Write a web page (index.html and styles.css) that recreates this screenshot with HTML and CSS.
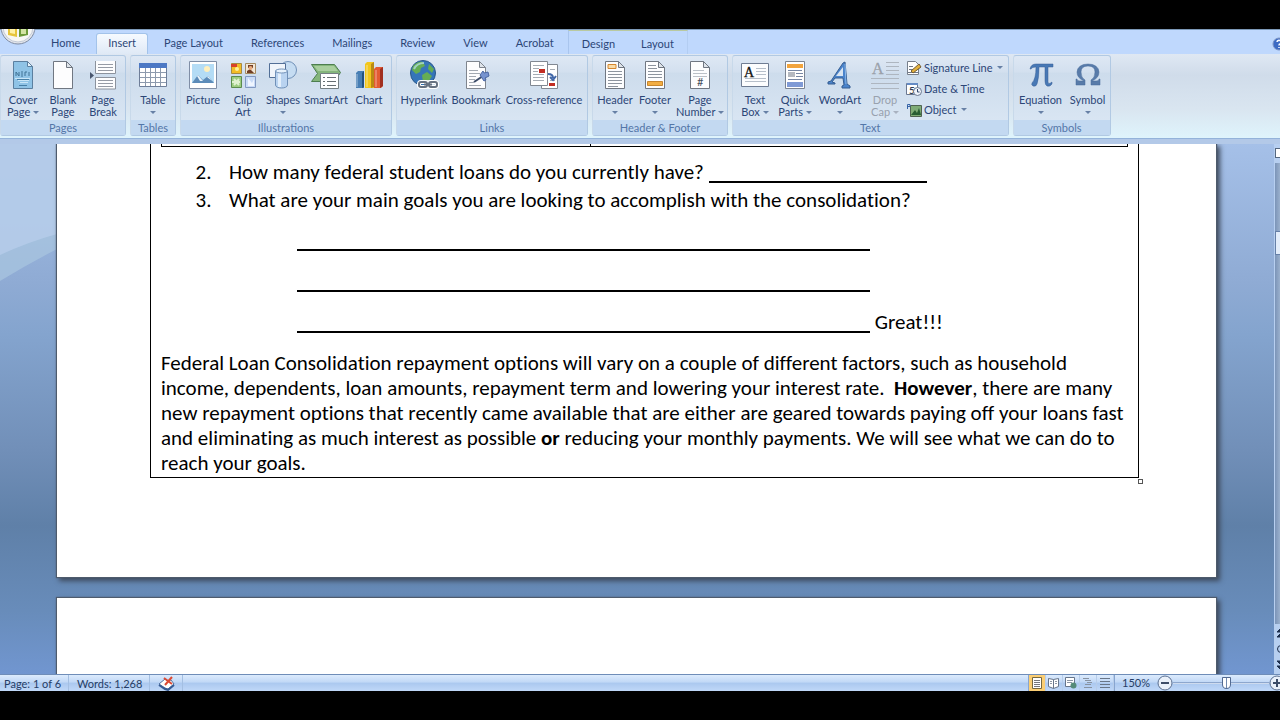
FILE: index.html
```
<!DOCTYPE html>
<html lang="en">
  <head>
    <meta charset="utf-8">
    <title>Document editor</title>
    <link rel="stylesheet" href="styles.css">
  </head>
  <body>
    <div class="app">
      <button class="office-button" aria-label="Office menu">
        <svg width="36" height="36" viewBox="0 0 36 36">
          <circle cx="18" cy="18" r="17" fill="#e3e6ec" stroke="#7e8ba3"/>
          <circle cx="18" cy="18" r="15" fill="#f7f7f5" stroke="#c3cad6"/>
          <path d="M8 17l9-2v13l-9-2z" fill="#e6c43c"/>
          <path d="M10 20h5v5l-5-1z" fill="#fff1a8"/>
          <path d="M19 15l9 2v9l-9 2z" fill="#6d9b3a"/>
          <path d="M21 20h5v5h-5z" fill="#d3e3a4"/>
        </svg>
      </button>

      <div class="tabs">
        <button class="tab">Home</button>
        <button class="tab selected">Insert</button>
        <button class="tab">Page Layout</button>
        <button class="tab">References</button>
        <button class="tab">Mailings</button>
        <button class="tab">Review</button>
        <button class="tab">View</button>
        <button class="tab">Acrobat</button>
        <div class="table-tools">
          <button class="tab">Design</button>
          <button class="tab">Layout</button>
        </div>
        <button class="help" aria-label="Help">
          <svg width="14" height="14" viewBox="0 0 14 14">
            <circle cx="7" cy="7" r="6" fill="#3d6bc4" stroke="#7c94c4"/>
            <path d="M5 5a2 2 0 1 1 3 2q-1 0-1 1.500M7 10v1" fill="none" stroke="#fff" stroke-width="1.500"/>
          </svg>
        </button>
      </div>

      <div class="ribbon">
        <div class="group">
          <div class="group-tools">
            <button class="tool mid">
              <svg width="28" height="28" viewBox="0 0 28 28">
                <path d="M4.500 .5h14l5 5v22h-19z" fill="#8fc3e6" stroke="#5b7f9f"/>
                <path d="M18.500 .5v5h5z" fill="#e4f2fb" stroke="#5b7f9f"/>
                <path d="M7 15v-4l3 4v-4M12 11h2M12 13h2M12 15h2M16 15v-4h2M20 11v4" fill="none" stroke="#3f7396"/>
                <path d="M6 17.500h15M9 19.500h11M11 21.500h8" stroke="#c8e5f7"/>
                <path d="M8 18.500h12M10 24.500h8" stroke="#477fa6"/>
              </svg>
              <span>Cover<br>Page <i class="arrow"></i></span>
            </button>
            <button class="tool narrow">
              <svg width="28" height="28" viewBox="0 0 28 28">
                <path d="M4.500 .5h13l6 6v21h-19z" fill="#fdfdfe" stroke="#707782"/>
                <path d="M17.500 .5v6h6z" fill="#dfe4ea" stroke="#707782"/>
              </svg>
              <span>Blank<br>Page</span>
            </button>
            <button class="tool mid">
              <svg width="28" height="28" viewBox="0 0 28 28">
                <path d="M6.500 0v12.500h20V0M6.500 28V16.500h20V28z" fill="#fdfdfe" stroke="#8b929d"/>
                <path d="M9 3.500h15M9 6.500h15M9 9.500h15M9 19.500h15M9 22.500h15M9 25.500h15" stroke="#969ba5"/>
                <path d="M1 11l4 3.500-4 3.500z" fill="#48566e"/>
              </svg>
              <span>Page<br>Break</span>
            </button>
          </div>
          <div class="group-label">Pages</div>
        </div>

        <div class="group">
          <div class="group-tools">
            <button class="tool mid">
              <svg width="28" height="28" viewBox="0 0 28 28">
                <path d="M.5 2.500h27v23H.5z" fill="#fff" stroke="#6e7e99"/>
                <path d="M0 2h28v5H0z" fill="#4c78c4"/>
                <path d="M1 11.500h26M1 16.500h26M1 21.500h26M6.500 7v18M11.500 7v18M16.500 7v18M21.500 7v18" stroke="#8d9aad"/>
              </svg>
              <span>Table<br><i class="arrow"></i></span>
            </button>
          </div>
          <div class="group-label">Tables</div>
        </div>

        <div class="group">
          <div class="group-tools">
            <button class="tool mid">
              <svg width="28" height="28" viewBox="0 0 28 28">
                <path d="M.5 .5h27v27H.5z" fill="#fff" stroke="#7f8ea6"/>
                <path d="M3 3h22v19H3z" fill="#b4dcf5"/>
                <circle cx="18" cy="8" r="3" fill="#fff0bd"/>
                <path d="M3 22l6-8 5 5 5-4 6 7z" fill="#5d8cb9"/>
                <path d="M8 15l1-1 5 6h-3zM18 16l1-1 4 5z" fill="#e8f3fb"/>
              </svg>
              <span>Picture</span>
            </button>
            <button class="tool narrow">
              <svg width="28" height="28" viewBox="0 0 28 28">
                <path d="M2.500 2.500h10v10h-10z" fill="#f3bd25" stroke="#a68a42"/>
                <path d="M2 3h6v3H2z" fill="#d8412a"/>
                <circle cx="8" cy="8" r="2" fill="#fff09a"/>
                <path d="M16.500 2.500h10v10h-10z" fill="#f1e6d5" stroke="#a58b62"/>
                <path d="M19 4h5v3h-5zM18 10l3-2 4 4h-7z" fill="#703d25"/>
                <circle cx="21.500" cy="7" r="2" fill="#e9ab7d"/>
                <path d="M2.500 15.500h10v11h-10z" fill="#9ccc80" stroke="#5b8b4e"/>
                <path d="M5 18l5 6M10 18l-5 6M3 21h8" stroke="#dff1cf" stroke-width="2"/>
                <path d="M16.500 15.500h10v11h-10z" fill="#c9dbf7" stroke="#8299c2"/>
                <path d="M19 17l4 5 2-4v7h-6z" fill="#eff5ff"/>
              </svg>
              <span>Clip<br>Art</span>
            </button>
            <button class="tool mid">
              <svg width="28" height="28" viewBox="0 0 28 28">
                <circle cx="19" cy="9" r="8.500" fill="#c5dcf2" stroke="#7191b8"/>
                <path d="M.5 2.500h16v14H.5z" fill="#f0f5fb" stroke="#526f97"/>
                <path d="M6.500 10v14c0 4 12 4 12 0V10z" fill="#b9d3f0" stroke="#7191b8"/>
                <path d="M9 12h3v14H9z" fill="#e3effb"/>
                <ellipse cx="12.500" cy="10" rx="6" ry="2" fill="#e7f2fc" stroke="#7191b8"/>
              </svg>
              <span>Shapes<br><i class="arrow"></i></span>
            </button>
            <button class="tool medium">
              <svg width="30" height="28" viewBox="0 0 30 28">
                <path d="M.5 3.500h23l6 8-6 9H.5l6-8z" fill="#84b57b" stroke="#4d7e4f"/>
                <path d="M3 5h20l4 5H7z" fill="#a9cf9e"/>
                <path d="M9.500 12.500h18v15h-18z" fill="#fff" stroke="#747f83"/>
                <path d="M12 16.500h2M16 16.500h9M12 20.500h2M16 20.500h9M12 24.500h2M16 24.500h9" stroke="#666e72"/>
              </svg>
              <span>SmartArt</span>
            </button>
            <button class="tool mid">
              <svg width="28" height="28" viewBox="0 0 28 28">
                <path d="M1 12l2-2h6v17H1z" fill="#477eb4"/>
                <path d="M7 12l2-2v16l-2 1z" fill="#24527f"/>
                <path d="M10 3l2-2h7v26h-9z" fill="#f2c61c"/>
                <path d="M16 3l3-2v25l-3 1z" fill="#b98914"/>
                <path d="M19 8l2-2h7v19l-2 2h-7z" fill="#e35a33"/>
                <path d="M25 8l3-2v19l-3 2z" fill="#a12f20"/>
                <path d="M2 13v13M12 4v22M21 9v17" stroke="#fff" opacity=".5"/>
              </svg>
              <span>Chart</span>
            </button>
          </div>
          <div class="group-label">Illustrations</div>
        </div>

        <div class="group">
          <div class="group-tools">
            <button class="tool wide">
              <svg width="30" height="28" viewBox="0 0 30 28">
                <circle cx="14" cy="12" r="12.500" fill="#3575b9" stroke="#2a588a"/>
                <path d="M4 5q5-5 10-4l2 4-4 2-1 4-4 2-4-4zM13 14l5-3 5 4-5 8-4-2zM20 3l5 5-2 4-4-4z" fill="#65ad54"/>
                <path d="M5 8q3-6 10-6" fill="none" stroke="#b9dff0" stroke-width="2" opacity=".7"/>
                <g fill="none" stroke="#fff" stroke-width="4"><rect x="10" y="21" width="9" height="5" rx="2"/><rect x="19" y="21" width="9" height="5" rx="2"/></g>
                <g fill="none" stroke="#667180" stroke-width="2"><rect x="10" y="21" width="8" height="5" rx="2"/><rect x="20" y="21" width="8" height="5" rx="2"/><path d="M15 23.500h8"/></g>
              </svg>
              <span>Hyperlink</span>
            </button>
            <button class="tool wide">
              <svg width="28" height="28" viewBox="0 0 28 28">
                <path d="M4.500 .5h13l6 6v21h-19z" fill="#fdfdfe" stroke="#7f858e"/>
                <path d="M17.500 .5v6h6z" fill="#dfe4ea" stroke="#7f858e"/>
                <path d="M7 9.500h9M7 12.500h11M7 15.500h7M7 18.500h6M7 21.500h5M7 24.500h12" stroke="#a2a9b2"/>
                <path d="M12 21l9-6" stroke="#3c4c69" stroke-width="2"/>
                <path d="M18 14l4 6 2-1-1-2 4-2-1-4-4 1-1-2z" fill="#7693cf" stroke="#4b67a3"/>
              </svg>
              <span>Bookmark</span>
            </button>
            <button class="tool xwide">
              <svg width="28" height="28" viewBox="0 0 28 28">
                <path d="M11.500 3.500h16v24h-16z" fill="#fff" stroke="#818892"/>
                <path d="M.5 .5h17v24H.5z" fill="#fff" stroke="#818892"/>
                <path d="M3 4.500h11M3 7.500h6M3 10.500h5M3 13.500h11M3 16.500h11M3 19.500h11M20 8.500h5M20 19.500h5" stroke="#a6acb4"/>
                <path d="M9 8h6v4H9zM19 22h6v3h-6z" fill="#c22d23"/>
                <path d="M18 13q5 0 5 4M20 16l3 3 3-4" fill="none" stroke="#4167a8" stroke-width="2"/>
              </svg>
              <span>Cross-reference</span>
            </button>
          </div>
          <div class="group-label">Links</div>
        </div>

        <div class="group">
          <div class="group-tools">
            <button class="tool mid">
              <svg width="28" height="28" viewBox="0 0 28 28">
                <path d="M4.500 .5h13l6 6v21h-19z" fill="#fdfdfe" stroke="#707782"/>
                <path d="M17.500 .5v6h6z" fill="#dfe4ea" stroke="#707782"/>
                <path d="M7 3.500h8v4H7z" fill="#f9dca9" stroke="#d5862f"/>
                <path d="M7 10.500h14M7 13.500h14M7 16.500h14M7 19.500h14M7 22.500h14M7 25.500h10" stroke="#8d949e"/>
              </svg>
              <span>Header<br><i class="arrow"></i></span>
            </button>
            <button class="tool narrow">
              <svg width="28" height="28" viewBox="0 0 28 28">
                <path d="M4.500 .5h13l6 6v21h-19z" fill="#fdfdfe" stroke="#707782"/>
                <path d="M17.500 .5v6h6z" fill="#dfe4ea" stroke="#707782"/>
                <path d="M7 4.500h8M7 7.500h9M7 10.500h14M7 13.500h14M7 16.500h14" stroke="#8d949e"/>
                <path d="M6.500 20.500h15v4h-15z" fill="#f2ad42" stroke="#c8862d"/>
              </svg>
              <span>Footer<br><i class="arrow"></i></span>
            </button>
            <button class="tool wide">
              <svg width="28" height="28" viewBox="0 0 28 28">
                <path d="M4.500 .5h13l6 6v21h-19z" fill="#fdfdfe" stroke="#707782"/>
                <path d="M17.500 .5v6h6z" fill="#dfe4ea" stroke="#707782"/>
                <path d="M7 9.500h11M7 12.500h14M7 15.500h14" stroke="#bcc1c8"/>
                <text x="11" y="25" font-size="11" fill="#454d5c">#</text>
              </svg>
              <span>Page<br>Number <i class="arrow"></i></span>
            </button>
          </div>
          <div class="group-label">Header &amp; Footer</div>
        </div>

        <div class="group">
          <div class="group-tools">
            <button class="tool mid">
              <svg width="28" height="28" viewBox="0 0 28 28">
                <path d="M.5 2.500h27v23H.5z" fill="#fcfdfe" stroke="#6f7d93"/>
                <path d="M15 7.500h10M15 10.500h10M15 13.500h10M4 17.500h21M4 20.500h21" stroke="#b6bfca"/>
                <text class="serif" x="3" y="16" font-size="14" fill="#111" stroke="#111" stroke-width=".3">A</text>
              </svg>
              <span>Text<br>Box <i class="arrow"></i></span>
            </button>
            <button class="tool narrow">
              <svg width="28" height="28" viewBox="0 0 28 28">
                <path d="M4.500 .5h19v27h-19z" fill="#fff" stroke="#7b8492"/>
                <path d="M6 3h16v4H6z" fill="#f2a43d"/>
                <path d="M7 9.500h14M15 12.500h7M15 15.500h7M7 18.500h14" stroke="#7787a4"/>
                <path d="M7 11h7v5H7z" fill="#b5b9c0"/>
                <path d="M6 21h16v5H6z" fill="#7f9ad5"/>
              </svg>
              <span>Quick<br>Parts <i class="arrow"></i></span>
            </button>
            <button class="tool wide">
              <svg width="28" height="28" viewBox="0 0 28 28">
                <path d="M19 1l2 22 3 2v2h-8v-2l2-1-1-7H9l-3 4 3 1v1H2v-2l3-1L17 2z" fill="#4a83cb" stroke="#355d91"/>
                <path d="M17 6v9h-7z" fill="#d9e5f2"/>
                <path d="M19 3l1 20" stroke="#8db9ea"/>
              </svg>
              <span>WordArt<br><i class="arrow"></i></span>
            </button>
            <button class="tool narrow" disabled>
              <svg width="28" height="28" viewBox="0 0 28 28">
                <text class="serif" x="1" y="13" font-size="16" fill="#9ba1aa" stroke="#9ba1aa" stroke-width=".3">A</text>
                <path d="M15 1.500h13M15 5.500h13M15 9.500h13M15 13.500h13M0 17.500h28M0 22.500h28M0 27.500h28" stroke="#aeb6c0"/>
              </svg>
              <span>Drop<br>Cap <i class="arrow"></i></span>
            </button>
            <div class="tool-list">
              <button class="row-tool">
                <svg width="16" height="14" viewBox="0 0 16 14">
                  <path d="M1.500 .5h8l3 3v10h-11z" fill="#fff" stroke="#777f8b"/>
                  <path d="M3 5.500h4M3 8.500h4M2 11.500h11" stroke="#6f7785"/>
                  <path d="M5 10l8-7 2 3-8 6z" fill="#e2b13d" stroke="#765b2f"/>
                </svg>
                Signature Line <i class="arrow"></i>
              </button>
              <button class="row-tool">
                <svg width="16" height="14" viewBox="0 0 16 14">
                  <path d="M.5 1.500h11v11H.5z" fill="#fff" stroke="#6b7890"/>
                  <path d="M1 1h11v2H1z" fill="#648bc5"/>
                  <text x="3" y="12" font-size="10" font-weight="bold" fill="#303c52">5</text>
                  <circle cx="11.500" cy="9.500" r="4" fill="#eef3fa" stroke="#6b7890"/>
                  <path d="M11.500 7v3h2" fill="none" stroke="#34496d"/>
                </svg>
                Date &amp; Time
              </button>
              <button class="row-tool">
                <svg width="16" height="14" viewBox="0 0 16 14">
                  <path d="M4.500 2.500h11v11h-11z" fill="#7fac76" stroke="#4f6351"/>
                  <path d="M5 12l4-5 2 3 2-5 2 7z" fill="#275d32"/>
                  <path d="M1.500 6V1.500H4v2H2" fill="none" stroke="#3764a8"/>
                </svg>
                Object <i class="arrow"></i>
              </button>
            </div>
          </div>
          <div class="group-label">Text</div>
        </div>

        <div class="group">
          <div class="group-tools">
            <button class="tool wide">
              <svg width="28" height="28" viewBox="0 0 28 28">
                <path d="M3 8q1-5 6-5h17v3h-5v15q0 3 4 0v2q-2 3-5 2-2-1-2-5V6h-6q0 11-2 17-1 3-4 2-2-1-1-3 4-4 4-16-4 0-5 2z" fill="#4778b5" stroke="#385f94" stroke-width=".5"/>
              </svg>
              <span>Equation<br><i class="arrow"></i></span>
            </button>
            <button class="tool mid">
              <svg width="28" height="28" viewBox="0 0 28 28">
                <path d="M2 18h1q0 2 3 2h4Q3 17 3 11 4 3 14 3t11 8q0 6-7 9h4q3 0 3-2h1v6h-9v-5q4-2 4-8 0-6-7-6t-7 6q0 6 4 8v5H2z" fill="#587ba9" stroke="#466b9b" stroke-width=".5"/>
              </svg>
              <span>Symbol<br><i class="arrow"></i></span>
            </button>
          </div>
          <div class="group-label">Symbols</div>
        </div>
      </div>

      <div class="workspace">
        <svg class="swoosh" width="57" height="140" viewBox="0 0 57 140">
          <path d="M0 0h57v105Q28 120 0 137z" fill="#a9c6df" opacity=".7"/>
          <path d="M0 0h57v90Q28 98 0 111z" fill="#b9cfec" opacity=".7"/>
        </svg>
        <div class="pages">
          <div class="page">
            <div class="frame">
              <div class="inner-table"><div></div><div></div></div>
              <ol start="2">
                <li>How many federal student loans do you currently have? <span class="blank"></span></li>
                <li>What are your main goals you are looking to accomplish with the consolidation?</li>
              </ol>
              <div class="answers">
                <div><span class="blank long"></span></div>
                <div><span class="blank long"></span></div>
                <div><span class="blank long"></span> Great!!!</div>
              </div>
              <p>
                Federal Loan Consolidation repayment options will vary on a couple of different factors, such as household<br>
                income, dependents, loan amounts, repayment term and lowering your interest rate.&nbsp; <b>However</b>, there are many<br>
                new repayment options that recently came available that are either are geared towards paying off your loans fast<br>
                and eliminating as much interest as possible <b>or</b> reducing your monthly payments. We will see what we can do to<br>
                reach your goals.
              </p>
              <div class="resize-handle"></div>
            </div>
          </div>
          <div class="page next"></div>
        </div>
        <div class="scrollbar">
          <div class="ruler-toggle"></div>
          <div class="track"><div class="thumb"></div></div>
          <div class="browse">
            <svg width="6" height="50" viewBox="0 0 6 50">
              <path d="M6 8H3l3-3M6 13H3l3-3M6 37H3l3 3M6 42H3l3 3" fill="#1d2f4d" stroke="#1d2f4d"/>
              <circle cx="7" cy="25" r="3.500" fill="none" stroke="#1d2f4d"/>
            </svg>
          </div>
        </div>
      </div>

      <div class="status-bar">
        <div class="status-item">Page: 1 of 6</div>
        <div class="status-item">Words: 1,268</div>
        <div class="status-item">
          <svg width="17" height="14" viewBox="0 0 17 14">
            <path d="M1 8l6-5 2 2 4-1 3 4-6 5-3-1z" fill="#fff" stroke="#52719f"/>
            <path d="M1 9l6 4 3 1 6-5" fill="none" stroke="#365b94" stroke-width="2"/>
            <path d="M6 2l8 6M14 1L7 9" stroke="#dc4b35" stroke-width="2"/>
          </svg>
        </div>
        <div class="views">
          <button class="view active" aria-label="Print layout"><svg width="12" height="12" viewBox="0 0 12 12"><path d="M1.500 .5h9v11h-9z" fill="#fff" stroke="#77683e"/><path d="M3 3.500h6M3 5.500h6M3 7.500h6M3 9.500h6" stroke="#77777a"/></svg></button>
          <button class="view" aria-label="Full screen reading"><svg width="12" height="12" viewBox="0 0 12 12"><path d="M.5 1.500l5 1 5-1v8l-5 2-5-2zM5.500 2.500v9" fill="#fff" stroke="#66758b"/><path d="M2 4.500h2M2 6.500h2M7 4.500h2M7 6.500h2" stroke="#8c96a4"/></svg></button>
          <button class="view" aria-label="Web layout"><svg width="12" height="12" viewBox="0 0 12 12"><path d="M.5 .5h9v9h-9z" fill="#fff" stroke="#66758b"/><path d="M2 3.500h6M2 5.500h5" stroke="#8c96a4"/><circle cx="8.500" cy="8.500" r="3" fill="#558b78"/></svg></button>
          <button class="view" aria-label="Outline"><svg width="12" height="12" viewBox="0 0 12 12"><path d="M1 1.500h6M3 3.500h6M5 5.500h5M3 7.500h6M2 10.500h8" stroke="#8893a2"/></svg></button>
          <button class="view" aria-label="Draft"><svg width="12" height="12" viewBox="0 0 12 12"><path d="M1 1.500h10M1 4.500h10M1 7.500h10M1 10.500h10" stroke="#687688"/></svg></button>
        </div>
        <button class="zoom-level">150%</button>
        <button class="zoom-button" aria-label="Zoom out">
          <svg width="16" height="16" viewBox="0 0 16 16"><circle cx="8" cy="8" r="7" fill="#e9f0fa" stroke="#5b6f90"/><path d="M4 8h8" stroke="#3c4c68" stroke-width="2"/></svg>
        </button>
        <input class="zoom-slider" type="range" min="0" max="100" value="56" aria-label="Zoom">
        <button class="zoom-button" aria-label="Zoom in">
          <svg width="16" height="16" viewBox="0 0 16 16"><circle cx="8" cy="8" r="7" fill="#e9f0fa" stroke="#5b6f90"/><path d="M4 8h8M8 4v8" stroke="#3c4c68" stroke-width="2"/></svg>
        </button>
      </div>
    </div>
  </body>
</html>
```
FILE: styles.css
```
* {
  box-sizing: border-box;
}
body {
  margin: 0;
  height: 100vh;
  padding: 29px 0;
  background-color: #000;
  font: 11px/12px Lato, "Open Sans", sans-serif;
  color: #2c4677;
}
button {
  margin: 0;
  padding: 0;
  border: 0;
  background: none;
  font: inherit;
  color: inherit;
}
svg {
  display: block;
  flex: none;
  overflow: visible;
}
.serif {
  font-family: "Liberation Serif", serif;
}
.app {
  position: relative;
  display: flex;
  flex-direction: column;
  height: 100%;
  overflow: hidden;
}
.office-button {
  position: absolute;
  top: -20px;
  left: 0;
}

/* tabs */
.tabs {
  display: flex;
  flex: none;
  height: 25px;
  padding: 3px 0 0 37px;
  border-top: 1px solid #7c99b8;
  background-color: #bfd8fd;
}
.tab {
  margin: 0 2px;
  padding: 0 11px 2px;
  border: 1px solid transparent;
  border-bottom: 0;
  white-space: nowrap;
}
.tab.selected {
  border-color: #a3c3ea;
  border-radius: 3px 3px 0 0;
  background: linear-gradient(#f6faff, #dfe9f6);
}
.table-tools {
  display: flex;
  margin-top: -3px;
  padding-top: 3px;
  border-top: 1px solid #b9c9a0;
  border-left: 1px solid #a9c5ee;
  border-right: 1px solid #b3cdf2;
}
.table-tools .tab {
  margin: 0 1px;
}
.help {
  width: 8px;
  margin-left: auto;
}

/* ribbon */
.ribbon {
  display: flex;
  flex: none;
  gap: 4px;
  height: 85px;
  padding: 1px 0 2px;
  border-bottom: 1px solid #94b3da;
  background: linear-gradient(#dfe8f3, #d0dcea 25%, #d9e5f0 65%, #dff4fc);
}
.group {
  display: flex;
  flex-direction: column;
  border: 1px solid #b1c9e3;
  border-left-color: #c8d9ea;
  border-radius: 3px;
  background: linear-gradient(#dee8f4, #d3e0ef 20%, #cddcec 22%, #dce8f5);
}
.group-tools {
  display: flex;
  flex: 1;
  padding: 0 1px;
}
.group-label {
  height: 15px;
  line-height: 15px;
  text-align: center;
  color: #5376a8;
  background-color: #c3d9f1;
}
.tool {
  display: flex;
  flex-direction: column;
  align-items: center;
  gap: 5px;
  padding-top: 5px;
  line-height: 12px;
  white-space: nowrap;
}
.tool:disabled {
  color: #98a1ae;
}
.narrow {
  width: 38px;
}
.mid {
  width: 42px;
}
.medium {
  width: 44px;
}
.wide {
  width: 52px;
}
.xwide {
  width: 84px;
}
.arrow {
  display: inline-block;
  border: 3px solid transparent;
  border-top-color: #6780a5;
  border-bottom: 0;
  vertical-align: 2px;
}
.tool:disabled .arrow {
  border-top-color: #a9b2c0;
}
.tool-list {
  display: flex;
  flex-direction: column;
  align-items: flex-start;
  padding: 1px 4px 0 2px;
}
.row-tool {
  display: flex;
  align-items: center;
  gap: 2px;
  height: 21px;
  white-space: nowrap;
}
.row-tool .arrow {
  margin-left: 2px;
}

/* document */
.workspace {
  position: relative;
  display: flex;
  flex: 1;
  min-height: 0;
  border-top: 5px solid #b3c9e8;
  background: linear-gradient(#a5c0e8, #8fabd4 26%, #84a4ce 36%, #718fb8 58%, #5f80a8 72%, #688cba 88%, #7196d0);
}
.swoosh {
  position: absolute;
  top: 0;
  left: 0;
}
.pages {
  position: relative;
  flex: 1;
  min-width: 0;
  padding: 0 58px 0 57px;
  overflow: hidden;
}
.page {
  height: 433px;
  padding: 0 77px 0 93px;
  background-color: #fff;
  box-shadow: 0 0 1px 1px #4e5b6c, 3px 3px 5px 1px #3e4a5c;
}
.page.next {
  margin-top: 21px;
}
.frame {
  position: relative;
  padding: 0 10px 1px;
  border: 1px solid #000;
  border-top: 0;
  font: 21px/28px Calibri, Carlito, Lato, sans-serif;
  font-variant-ligatures: none;
  color: #000;
  white-space: nowrap;
}
.inner-table {
  display: flex;
  height: 3px;
  border: 1px solid #000;
  border-top: 0;
}
.inner-table div {
  flex: 5;
}
.inner-table div:first-child {
  flex: 4;
  border-right: 1px solid #000;
}
ol {
  margin: 0;
  padding: 11px 0 0 68px;
}
li::marker {
  content: counter(list-item) ".\2002\2004";
}
.blank {
  display: inline-block;
  width: 218px;
  height: 2px;
  background-color: #000;
  vertical-align: -4px;
}
.blank.long {
  width: 573px;
}
.answers {
  padding: 6px 0 0 136px;
  line-height: 41px;
}
.frame p {
  margin: 0;
  padding: 8px 0 0;
  line-height: 25px;
}
.resize-handle {
  position: absolute;
  right: -5px;
  bottom: -7px;
  width: 5px;
  height: 5px;
  border: 1px solid #555;
  background-color: #fff;
}

/* scrollbar */
.scrollbar {
  display: flex;
  flex-direction: column;
  width: 6px;
  background-color: #b7cff0;
}
.ruler-toggle {
  height: 10px;
  margin: 4px 0 5px 1px;
  border: 1px solid #55677f;
  border-right: 0;
  background-color: #fff;
}
.track {
  flex: 1;
  margin-left: 1px;
  padding-top: 68px;
  background: linear-gradient(90deg, #7b94b8, #9ab0cd);
}
.thumb {
  height: 24px;
  border: 1px solid #6680a8;
  border-right: 0;
  background-color: #e3edfa;
}
.browse {
  height: 50px;
}

/* status bar */
.status-bar {
  display: flex;
  flex: none;
  align-items: center;
  height: 17px;
  border-top: 1px solid #6f8db8;
  background: linear-gradient(#dcebfd, #c1d8f6 45%, #abc8ef 50%, #c0d8f8);
  overflow: hidden;
  color: #263d66;
}
.status-item {
  height: 16px;
  padding: 3px 7px 0 8px;
  border-right: 1px solid #a4bfe2;
}
.status-item:first-child {
  padding-left: 4px;
}
.status-item svg {
  margin-top: -2px;
}
.views {
  display: flex;
  margin-left: auto;
  border: 1px solid #88a5cf;
}
.view {
  display: flex;
  align-items: center;
  justify-content: center;
  width: 17px;
  height: 16px;
  border-right: 1px solid #b7cdea;
}
.view.active {
  background-color: #fbce74;
}
.zoom-level {
  width: 42px;
}
.zoom-button {
  flex: none;
  width: 16px;
}
.zoom-button:last-child {
  width: 11px;
}
.zoom-slider {
  width: 96px;
  height: 16px;
  margin: 0;
  appearance: none;
  background: linear-gradient(#6d8dbd, #eef5fe) center / 100% 2px no-repeat;
}
.zoom-slider::-webkit-slider-thumb {
  appearance: none;
  width: 9px;
  height: 12px;
  border: 1px solid #526a91;
  border-radius: 1px 1px 5px 5px;
  background: linear-gradient(90deg, #fff 3px, #7189ae 3px, #7189ae 4px, #fff 4px);
}
```
